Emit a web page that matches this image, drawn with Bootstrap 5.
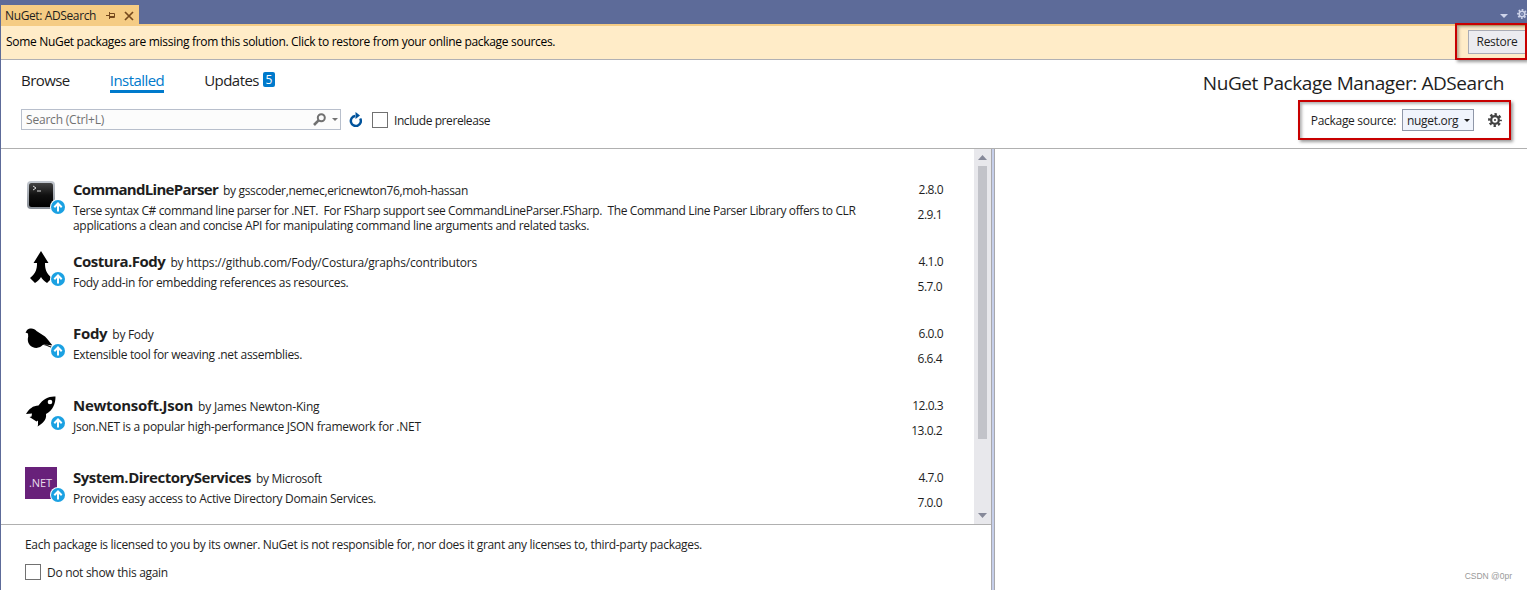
<!DOCTYPE html>
<html lang="en">
<head>
<meta charset="utf-8">
<meta name="viewport" content="width=device-width, initial-scale=1">
<title>NuGet: ADSearch</title>
<link href="https://cdn.jsdelivr.net/npm/bootstrap@5.3.0/dist/css/bootstrap.min.css" rel="stylesheet">
<style>
  body { font: 12px/15px "Open Sans", "Noto Sans", sans-serif; letter-spacing: -.31px; color: #1e1e1e; background: #fff; }
  .ide { height: 590px; border-left: 1px solid #5d6b99; }
  .tabstrip { height: 24px; background: #5d6b99; }
  .doc-tab { height: 19px; width: 138px; background: #f5cc84; padding: 2px 0 0 4px; letter-spacing: -.38px; }
  .infobar { height: 36px; background: #ffecc8; border-top: 2px solid #f5cc84; border-bottom: 1px solid #b0b0b4; padding-left: 5px; color: #000; }
  .info-text { margin-top: -2px; }
  .restore { width: 58px; height: 24px; background: #ececf0; border: 1px solid #a9abb5; color: #1e1e1e; margin: 0 1px 2px 0; }
  .marked { position: relative; }
  .marked::after { content: ""; position: absolute; border: 2px solid #c80000; box-shadow: 2px 2px 3px rgba(0,0,0,.4), inset 2px 2px 3px rgba(0,0,0,.3); pointer-events: none; }
  .marked-restore::after { left: -13px; top: -7px; width: 72px; height: 37px; }
  .marked-source::after { left: -13px; top: -9px; width: 213px; height: 40px; }
  .head { height: 89px; border-bottom: 1px solid #b0b0b0; }
  .tabs { gap: 40px; font-size: 15px; line-height: 20px; letter-spacing: -.55px; padding: 10px 0 0 20px; height: 49px; }
  .tabs > * { height: 23px; }
  .tabs .on { color: #007acc; border-bottom: 3px solid #007acc; }
  .count { background: #007acc; color: #fff; width: 12px; height: 15px; font-size: 12px; line-height: 15px; border-radius: 2px; text-align: center; letter-spacing: 0; margin: 2px 0 0 4px; }
  .search { width: 320px; height: 21px; border: 1px solid #b8bfcc; background: #fcfcfc; color: #717171; margin-left: 20px; padding: 0 2px 0 4px; letter-spacing: -.2px; }
  .box { width: 16px; height: 16px; border: 1px solid #717171; background: #fff; flex: none; }
  .prerelease { margin-top: 2px; letter-spacing: -.42px; }
  .pm-title { font-size: 19px; line-height: 24px; letter-spacing: -.42px; margin: 11px 23px 0 0; }
  .source-row { margin: 14px 25px 0 0; height: 22px; }
  .picker { width: 72px; height: 22px; border: 1px solid #8f97a8; background: #f0f4fc; margin-left: 6px; padding: 0 3px 0 4px; }
  .left { width: 990px; }
  .pkgs { height: 376px; border-bottom: 1px solid #b0b0b0; }
  .pkg-list { padding: 26px 0 0 24px; }
  .pkg { height: 72px; }
  .pic { width: 48px; position: relative; padding-top: 4px; }
  .pic svg { display: block; }
  .pic .up { position: absolute; left: 25px; top: 24px; }
  .pkg-name { font-size: 15px; line-height: 20px; font-weight: 700; letter-spacing: -.5px; margin-right: 5px; }
  .name-tight { letter-spacing: -.7px; }
  .name-loose { letter-spacing: -.3px; }
  .by-wide { letter-spacing: -.18px; }
  .by-tight { letter-spacing: -.34px; }
  .desc { white-space: pre; margin-top: 4px; }
  .desc-tight { letter-spacing: -.375px; }
  .pkg-body { padding-top: 4px; }
  .ver { width: 60px; margin-right: 31px; padding-top: 7px; letter-spacing: -.5px; }
  .ver div + div { margin: 10px 1px 0 0; }
  .sbar { width: 17px; background: #e8e8ec; padding: 6px 0 6px; }
  .thumb { width: 9px; height: 273px; background: #c2c3c9; margin-top: 6px; }
  .splitter { width: 4px; background: #c6cfea; border: solid #a8a8ac; border-width: 0 1px; }
  .foot { padding: 12px 0 0 24px; }
  .again { margin: 1px 0 0 6px; letter-spacing: -.3px; }
  .watermark { position: absolute; right: 15px; bottom: 8px; font: 8.5px/12px "Liberation Sans", sans-serif; color: #999; letter-spacing: 0; }
</style>
</head>
<body class="overflow-hidden">
<svg width="0" height="0" class="position-absolute">
  <symbol id="up" viewBox="0 0 16 16"><circle cx="8" cy="8" r="8" fill="#fff"/><circle cx="8" cy="8" r="7" fill="#1ba1e2"/><path d="M8 12.5V5M4.3 8.2 8 4.5l3.7 3.7" fill="none" stroke="#fff" stroke-width="2"/></symbol>
  <symbol id="gear" viewBox="0 0 16 16"><g fill="none" stroke="currentColor"><circle cx="8" cy="8" r="4.400" stroke-width="2.600"/><circle cx="8" cy="8" r="6.500" stroke-width="2.800" stroke-dasharray="2.700 2.405" stroke-dashoffset="1.350"/></g><circle cx="8" cy="8" r="1.200" fill="currentColor"/></symbol>
</svg>
<div class="ide d-flex flex-column position-relative">
  <div class="tabstrip d-flex align-items-end justify-content-between">
    <div class="doc-tab d-flex align-items-center">
      <span>NuGet: ADSearch</span>
      <svg class="ms-auto" width="9" height="9" viewBox="0 0 9 9" fill="none" stroke="#75491d"><path d="M0 4.5h3M3.500 1v7M4 2.500h4.500v4H4M4 5.500h4"/></svg>
      <svg style="margin:0 5px 0 9px" width="10" height="10" viewBox="0 0 10 10" fill="none" stroke="#75491d" stroke-width="1.700"><path d="m1 1 8 8M9 1 1 9"/></svg>
    </div>
    <div class="d-flex align-items-center" style="color:#ced4ea;padding-bottom:5px">
      <svg width="8" height="4" viewBox="0 0 8 4" style="margin-top:3px"><path d="M0 0h8L4 4z" fill="currentColor"/></svg>
      <svg width="10" height="10" style="margin-left:9px"><use href="#gear"/></svg>
    </div>
  </div>
  <div class="infobar d-flex align-items-center justify-content-between">
    <span class="info-text">Some NuGet packages are missing from this solution. Click to restore from your online package sources.</span>
    <div class="marked marked-restore"><div class="restore d-flex align-items-center justify-content-center">Restore</div></div>
  </div>
  <div class="head d-flex justify-content-between">
    <div>
      <div class="tabs d-flex">
        <div>Browse</div><div class="on">Installed</div><div class="d-flex align-items-start">Updates<span class="count">5</span></div>
      </div>
      <div class="d-flex align-items-center">
        <div class="search d-flex align-items-center">
          <span class="me-auto">Search (Ctrl+L)</span>
          <svg width="13" height="13" viewBox="0 0 13 13" fill="none" stroke="#717171"><circle cx="8.300" cy="4.700" r="3.500" stroke-width="2"/><path d="M5.800 7.200 1 12" stroke-width="2.600"/></svg>
          <svg style="margin-left:6px" width="6" height="3" viewBox="0 0 6 3"><path d="M0 0h6L3 3z" fill="#717171"/></svg>
        </div>
        <svg class="ms-2" width="13" height="15" viewBox="0 0 13 15"><path d="M11.200 6.500A5 5 0 1 1 6.200 4" fill="none" stroke="#00539c" stroke-width="2.500"/><path d="M6.500 0v7L11 3.600z" fill="#00539c"/></svg>
        <span class="box" style="margin:0 6px 0 10px"></span><span class="prerelease">Include prerelease</span>
      </div>
    </div>
    <div class="d-flex flex-column align-items-end">
      <div class="pm-title">NuGet Package Manager: ADSearch</div>
      <div class="source-row marked marked-source d-flex align-items-center">
        <span>Package source:</span>
        <div class="picker d-flex align-items-center justify-content-between"><span>nuget.org</span><svg width="6" height="3" viewBox="0 0 6 3"><path d="M0 0h6L3 3z" fill="#1e1e1e"/></svg></div>
        <svg style="margin-left:14px;color:#424242" width="14" height="14"><use href="#gear"/></svg>
      </div>
    </div>
  </div>
  <div class="d-flex flex-grow-1">
    <div class="left">
      <div class="pkgs d-flex">
        <div class="pkg-list flex-grow-1">
          <div class="pkg d-flex">
            <div class="pic"><svg width="32" height="32" viewBox="0 0 32 32"><defs><linearGradient id="term" x2="0" y2="1"><stop stop-color="#444"/><stop offset=".5" stop-color="#111"/><stop offset="1"/></linearGradient><linearGradient id="rim" x2="0" y2="1"><stop stop-color="#c4c9d0"/><stop offset="1" stop-color="#888e96"/></linearGradient></defs><rect x="2" y="2" width="28" height="28" rx="4" fill="url(#rim)"/><rect x="4" y="4" width="24" height="24" rx="2.500" fill="url(#term)"/><path d="m8 7 3 2-3 2M12 12h4" fill="none" stroke="#ddd"/></svg><svg class="up" width="16" height="16"><use href="#up"/></svg></div>
            <div class="pkg-body flex-grow-1"><div class="d-flex align-items-baseline"><span class="pkg-name name-tight">CommandLineParser</span><span class="by-tight">by gsscoder,nemec,ericnewton76,moh-hassan</span></div><div class="desc"><span class="desc-tight">Terse syntax C# command line parser for .NET.  For FSharp support see CommandLineParser.FSharp.  The Command Line Parser Library offers to CLR</span>
applications a clean and concise API for manipulating command line arguments and related tasks.</div></div>
            <div class="ver text-end"><div>2.8.0</div><div>2.9.1</div></div>
          </div>
          <div class="pkg d-flex">
            <div class="pic"><svg width="32" height="32" viewBox="0 0 32 32"><path d="m16 0 7.500 12H20c0 6 1 10 7 15l-5 5c-3-2-5-4-6-6-1 2-3 4-6 6l-5-5c6-5 7-9 7-15H8.500z"/></svg><svg class="up" width="16" height="16"><use href="#up"/></svg></div>
            <div class="pkg-body flex-grow-1"><div class="d-flex align-items-baseline"><span class="pkg-name">Costura.Fody</span><span class="by-wide">by https://github.com/Fody/Costura/graphs/contributors</span></div><div class="desc">Fody add-in for embedding references as resources.</div></div>
            <div class="ver text-end"><div>4.1.0</div><div>5.7.0</div></div>
          </div>
          <div class="pkg d-flex">
            <div class="pic"><svg width="32" height="32" viewBox="0 0 32 32"><path d="M.5 9.500C2 8 1.500 6.500 4 5.800 7 4.800 10 5.800 11.500 8L20 13.500c3 3 5 6 7.500 9l-9-1.200c-3 3.500-7 4.500-11 2.700-4-2-5.500-6-4.300-10.500L3 10.500z"/><path d="m17 21 11 3.500M20 21l7 4" stroke="#000" fill="none" stroke-width=".7"/></svg><svg class="up" width="16" height="16"><use href="#up"/></svg></div>
            <div class="pkg-body flex-grow-1"><div class="d-flex align-items-baseline"><span class="pkg-name name-loose">Fody</span><span>by Fody</span></div><div class="desc">Extensible tool for weaving .net assemblies.</div></div>
            <div class="ver text-end"><div>6.0.0</div><div>6.6.4</div></div>
          </div>
          <div class="pkg d-flex">
            <div class="pic"><svg width="32" height="32" viewBox="0 0 32 32"><path d="M30.500 1.500C24 1 18 4 13.500 10.500 8 10.500 4 14 1 19l6-.5-.5 3-2 .5 7 4.500 1.500-1v4.500l-.5 1.500C17 29 22 25 21 19c7-4 9.500-10 9.500-17.500z"/><circle cx="25" cy="7" r="2.300" fill="#fff"/></svg><svg class="up" width="16" height="16"><use href="#up"/></svg></div>
            <div class="pkg-body flex-grow-1"><div class="d-flex align-items-baseline"><span class="pkg-name name-loose">Newtonsoft.Json</span><span class="by-wide">by James Newton-King</span></div><div class="desc" style="letter-spacing:-.28px">Json.NET is a popular high-performance JSON framework for .NET</div></div>
            <div class="ver text-end"><div>12.0.3</div><div>13.0.2</div></div>
          </div>
          <div class="pkg d-flex">
            <div class="pic"><svg width="32" height="32" viewBox="0 0 32 32"><path d="M0 0h32v32H0z" fill="#68217a"/><text x="4" y="20" font-size="11" textLength="23" fill="#e8dcec" letter-spacing="0">.NET</text></svg><svg class="up" width="16" height="16"><use href="#up"/></svg></div>
            <div class="pkg-body flex-grow-1"><div class="d-flex align-items-baseline"><span class="pkg-name">System.DirectoryServices</span><span>by Microsoft</span></div><div class="desc">Provides easy access to Active Directory Domain Services.</div></div>
            <div class="ver text-end"><div>4.7.0</div><div>7.0.0</div></div>
          </div>
        </div>
        <div class="sbar d-flex flex-column align-items-center">
          <svg width="9" height="5" viewBox="0 0 9 5"><path d="M0 5h9L4.500 0z" fill="#868999"/></svg>
          <div class="thumb"></div>
          <svg class="mt-auto" width="9" height="5" viewBox="0 0 9 5"><path d="M0 0h9L4.500 5z" fill="#868999"/></svg>
        </div>
      </div>
      <div class="foot">
        <div>Each package is licensed to you by its owner. NuGet is not responsible for, nor does it grant any licenses to, third-party packages.</div>
        <div class="d-flex align-items-center" style="margin-top:12px"><span class="box"></span><span class="again">Do not show this again</span></div>
      </div>
    </div>
    <div class="splitter"></div>
  </div>
  <div class="watermark">CSDN @0pr</div>
</div>
<script src="https://cdn.jsdelivr.net/npm/bootstrap@5.3.0/dist/js/bootstrap.bundle.min.js"></script>
</body>
</html>
